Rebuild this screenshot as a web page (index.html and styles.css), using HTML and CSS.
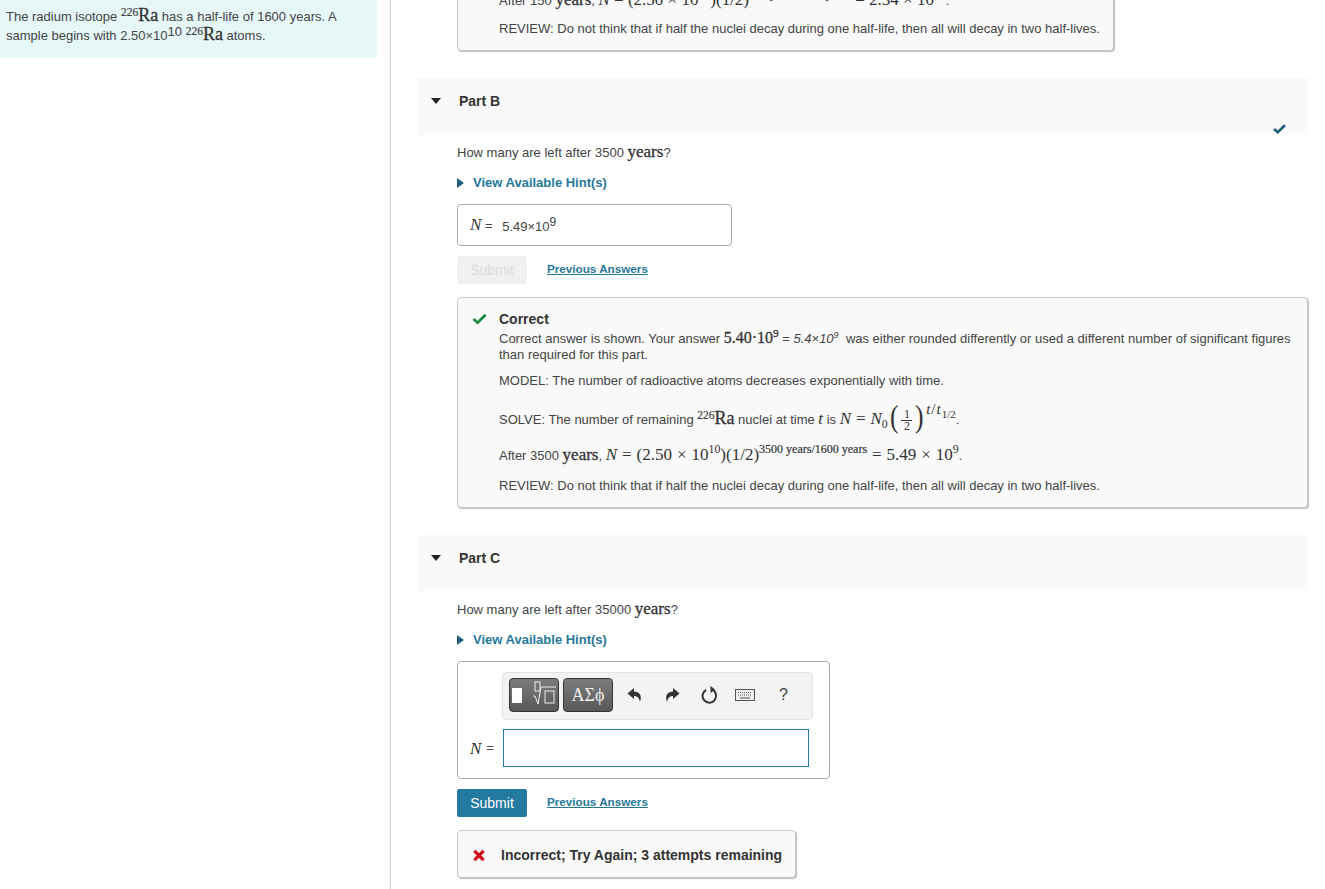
FILE: index.html
```html
<!DOCTYPE html>
<html lang="en">
<head>
<meta charset="utf-8">
<title>Part B and Part C</title>
<link rel="stylesheet" href="styles.css">
</head>
<body>
<div class="page">
  <aside class="side">
    <div class="intro">The radium isotope <span class="iso"><sup>226</sup><span class="m">Ra</span></span> has a half-life of 1600 years. A sample begins with 2.50×10<sup class="tsup">10</sup> <span class="iso"><sup>226</sup><span class="m">Ra</span></span> atoms.</div>
  </aside>
  <main class="main">
    <div class="indent">
      <div class="fb fb-top">
        <p class="fb-p line-a">After 150 <span class="m b">years</span>, <span class="m"><i>N</i> = (2.50 × 10<sup>10</sup>)(1/2)<sup class="small">150 <b>years</b>/1600 <b>years</b></sup> = 2.34 × 10<sup>10</sup></span>.</p>
        <p class="fb-p">REVIEW: Do not think that if half the nuclei decay during one half-life, then all will decay in two half-lives.</p>
      </div>
    </div>

    <section class="part part-b">
      <header class="part-head">
        <span class="tri-down"></span><h2 class="part-title">Part B</h2>
        <svg class="done" viewBox="0 0 14 11" width="13" height="10"><path d="M1 5.500 L5 9 L13 1.500" fill="none" stroke="#1f5f7a" stroke-width="3"/></svg>
      </header>
      <div class="indent">
        <p class="question">How many are left after 3500 <span class="m b">years</span>?</p>
        <p class="hint"><span class="tri-right"></span>View Available Hint(s)</p>
        <div class="answer answer-b"><span class="m i var">N</span> <span class="eq">=</span> <span class="val">5.49×10<sup>9</sup></span></div>
        <div class="actions">
          <button class="submit off">Submit</button>
          <a class="prev">Previous Answers</a>
        </div>
        <div class="fb fb-main">
          <div class="fb-title">
            <svg class="ok" viewBox="0 0 16 13" width="15" height="12"><path d="M1.500 6.500 L6 10.500 L14.500 2" fill="none" stroke="#1c8a3c" stroke-width="3"/></svg>
            <strong>Correct</strong>
          </div>
          <p class="fb-p tight">Correct answer is shown. Your answer <span class="m b">5.40·10<sup>9</sup></span> = <em>5.4×10<sup>9</sup></em>&nbsp; was either rounded differently or used a different number of significant figures than required for this part.</p>
          <p class="fb-p p-model">MODEL: The number of radioactive atoms decreases exponentially with time.</p>
          <p class="fb-p p-solve">SOLVE: The number of remaining <span class="iso"><sup>226</sup><span class="m">Ra</span></span> nuclei at time <span class="m i">t</span> is <span class="m wide"><i>N</i> = <i>N</i><sub>0</sub><span class="paren">(</span><span class="frac"><span>1</span><span>2</span></span><span class="paren">)</span><sup class="hi"><i>t</i>/<i>t</i><sub>1/2</sub></sup></span>.</p>
          <p class="fb-p p-after">After 3500 <span class="m b">years</span>, <span class="m wide"><i>N</i> = (2.50 × 10<sup>10</sup>)(1/2)<sup class="small">3500 <b>years</b>/1600 <b>years</b></sup> = 5.49 × 10<sup>9</sup></span>.</p>
          <p class="fb-p p-review">REVIEW: Do not think that if half the nuclei decay during one half-life, then all will decay in two half-lives.</p>
        </div>
      </div>
    </section>

    <section class="part part-c">
      <header class="part-head">
        <span class="tri-down"></span><h2 class="part-title">Part C</h2>
      </header>
      <div class="indent">
        <p class="question">How many are left after 35000 <span class="m b">years</span>?</p>
        <p class="hint"><span class="tri-right"></span>View Available Hint(s)</p>
        <div class="editor">
          <div class="toolbar">
            <button class="tpl tpl-a">
              <svg viewBox="0 0 46 32" width="46" height="32"><rect x="1" y="9" width="10" height="15" fill="#fff"/><rect x="24" y="3" width="5" height="9" fill="none" stroke="#eee"/><path d="M22 17 L24 17 L27 25 L30 8 H45" fill="none" stroke="#eee"/><rect x="34" y="12" width="9" height="12" fill="none" stroke="#eee"/></svg>
            </button>
            <button class="tpl tpl-b">ΑΣϕ</button>
            <svg class="tool t1" viewBox="0 0 16 16" width="16" height="16"><path d="M7 1 L0.500 6.500 L7 12 V9 C10 9 12 10.500 13 15 C15.500 8 12 4.500 7 4.500 Z" fill="#333"/></svg>
            <svg class="tool t2" viewBox="0 0 16 16" width="16" height="16"><path d="M9 1 L15.500 6.500 L9 12 V9 C6 9 4 10.500 3 15 C0.500 8 4 4.500 9 4.500 Z" fill="#333"/></svg>
            <svg class="tool t3" viewBox="0 0 18 18" width="18" height="18"><path d="M6.200 3.800 A6.800 6.800 0 1 0 12.200 3.700" fill="none" stroke="#333" stroke-width="2"/><path d="M10.500 0 L10.500 7 L15 3.500 Z" fill="#333"/></svg>
            <svg class="tool t4" viewBox="0 0 20 14" width="20" height="14"><rect x="0.500" y="1.500" width="19" height="11" fill="#eee" stroke="#555"/><path d="M3 4.500 H17 M3 7 H17" stroke="#555" stroke-dasharray="1 1"/><path d="M5 10 H15" stroke="#555"/></svg>
            <span class="tool help">?</span>
          </div>
          <div class="entry"><span class="m i var">N</span> <span class="eq">=</span><div class="input"></div></div>
        </div>
        <div class="actions actions-c">
          <button class="submit">Submit</button>
          <a class="prev">Previous Answers</a>
        </div>
        <div class="fb fb-bad">
          <svg class="bad" viewBox="0 0 14 14" width="14" height="13"><path d="M2 2 L12 12 M12 2 L2 12" stroke="#d0021b" stroke-width="3.600"/></svg>
          <strong>Incorrect; Try Again; 3 attempts remaining</strong>
        </div>
      </div>
    </section>
  </main>
</div>
</body>
</html>
```
FILE: styles.css
```css
* { box-sizing: border-box; }
html, body { margin: 0; height: 889px; overflow: hidden; background: #fff; }
body { font-family: "Liberation Sans", Arial, sans-serif; font-size: 13px; color: #444; line-height: 16px; }
p { margin: 0; }
sup, sub { line-height: 0; font-size: 70%; }
.page { display: flex; height: 889px; }
.side { width: 391px; flex: none; border-right: 1px solid #c3d3e0; }
.intro { width: 377px; height: 58px; background: #e6f7f8; padding: 6px 6px 0; line-height: 17px; }
.tsup { font-size: 13px; position: relative; top: 1px; }
.m { font-family: "Liberation Serif", "DejaVu Serif", serif; font-size: 17px; color: #333; line-height: 1; }
.wide { word-spacing: .7px; }
.b { font-weight: 400; -webkit-text-stroke: 0.3px #333; }
.i { font-style: italic; }
.iso { line-height: 1; }
.iso sup { font-family: "Liberation Serif", serif; font-size: 11.500px; -webkit-text-stroke: 0.2px #333; }
.iso .m { font-size: 18px; -webkit-text-stroke: 0.3px #333; }
.main { width: 917px; padding-left: 26px; flex: none; }
.indent { padding-left: 40px; }
.fb { background: #f9f9f9; border: 1px solid #c8c8c8; border-radius: 4px; box-shadow: 1px 1px 1px #bdbdbd; }
.fb-top { width: 657px; height: 61px; margin-top: -10px; padding: 0 0 0 41px; }
.fb-top .fb-p { white-space: nowrap; }
.line-a { height: 16px; margin-top: 0; }
.fb-top .line-a + .fb-p { margin-top: 14px; }
.part-b { margin-top: 27px; }
.part-c { margin-top: 27px; }
.part-head { position: relative; display: flex; align-items: flex-start; height: 57px; width: 891px; background: #f9f9f9; padding: 15px 0 0 14px; }
.part-c .part-head { height: 56px; }
.part-c .question { margin-top: 9px; }
.tri-down { width: 0; height: 0; border: 5.500px solid transparent; border-top: 6px solid #222; border-bottom: 0; margin: 5px 18px 0 0; }
.part-title { margin: 0; font-size: 14px; font-weight: 700; line-height: 16px; color: #333; }
.done { position: absolute; right: 22px; bottom: 1px; }
.question { margin-top: 8px; line-height: 18px; height: 18px; }
.hint { margin-top: 13px; color: #26789a; font-weight: 700; line-height: 18px; height: 18px; display: flex; align-items: center; }
.tri-right { width: 0; height: 0; border: 5px solid transparent; border-left: 7px solid #1f5f7a; border-right: 0; margin-right: 9px; }
.answer { margin-top: 12px; width: 275px; height: 42px; border: 1px solid #aaa; border-radius: 4px; padding: 11px 12px 0; white-space: nowrap; }
.var { font-size: 17px; }
.eq { margin-right: 3px; }
.val { position: relative; top: 1px; margin-left: 3px; }
.val sup { font-size: 12px; }
.actions { display: flex; align-items: flex-start; gap: 20px; margin-top: 10px; }
.submit { width: 70px; height: 28px; padding: 0; border: 0; border-radius: 2px; background: #24799e; color: #fff; font: 14px "Liberation Sans", Arial, sans-serif; }
.submit.off { background: #f0f0f0; color: #dcdcdc; }
.prev { color: #26789a; font-size: 11.700px; font-weight: 700; text-decoration: underline; line-height: 26px; }
.fb-main { position: relative; margin-top: 13px; width: 851px; height: 211px; padding: 13px 10px 0 41px; }
.fb-title { line-height: 16px; font-size: 14px; color: #333; }
.ok { position: absolute; left: 14px; top: 15px; }
.tight { line-height: 16px; margin-top: 3px; }
.tight .m { font-size: 16px; }
.p-model { margin-top: 10px; }
.p-solve { margin-top: 15px; height: 32px; line-height: 32px; white-space: nowrap; }
.p-after { margin-top: 8px; height: 24px; line-height: 24px; white-space: nowrap; }
.p-review { margin-top: 10px; }
.paren { font-size: 32px; font-weight: 300; position: relative; top: 3px; transform: scaleX(.8); display: inline-block; line-height: 0; margin: 0 1px; }
.frac { display: inline-flex; flex-direction: column; vertical-align: middle; font-size: 12px; line-height: 11px; text-align: center; width: 11px; margin: 0 1px; }
.frac span:first-child { border-bottom: 1px solid #333; }
.hi { font-size: 15px; position: relative; top: -3px; letter-spacing: 1px; }
.hi sub { font-size: 11px; letter-spacing: 0; }
.small { font-size: 12px; word-spacing: 0; -webkit-text-stroke: 0.2px #333; }
.small b { font-weight: 400; }
.editor { margin-top: 12px; width: 373px; height: 118px; border: 1px solid #aaa; border-radius: 4px; padding: 10px 0 0 44px; }
.toolbar { display: flex; align-items: center; width: 311px; height: 48px; background: #f3f3f3; border: 1px solid #e2e2e2; border-radius: 5px; padding: 0 0 2px 6px; }
.tpl { height: 34px; padding: 0; border: 1px solid #333; border-radius: 4px; background: linear-gradient(#7c7c7c, #585858); color: #eee; font: 18px "Liberation Serif", serif; display: flex; align-items: center; justify-content: center; }
.tpl-a { width: 50px; }
.tpl-b { width: 50px; margin-left: 4px; }
.tool { flex: none; }
.t1 { margin-left: 14px; }
.t2 { margin-left: 21px; }
.t3 { margin-left: 20px; }
.t4 { margin-left: 17px; }
.help { margin-left: 24px; font-size: 16px; color: #444; }
.entry { display: flex; align-items: center; margin-top: 9px; margin-left: -32px; gap: 5px; }
.input { width: 306px; height: 38px; border: 1px solid #24799e; background: #fff; margin-left: 1px; }
.actions-c { margin-top: 10px; }
.fb-bad { display: flex; align-items: center; gap: 15px; margin-top: 13px; width: 339px; height: 48px; padding: 2px 0 0 14px; }
.fb-bad strong { font-size: 14px; color: #333; white-space: nowrap; }
```
